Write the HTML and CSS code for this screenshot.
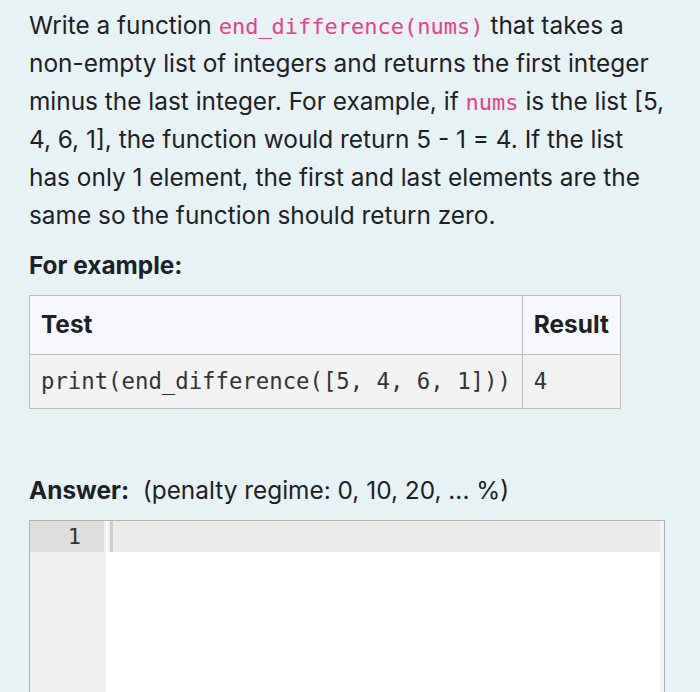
FILE: index.html
```html
<!DOCTYPE html>
<html>
<head>
<meta charset="utf-8">
<link rel="stylesheet" href="styles.css">
</head>
<body>
<div class="page">
  <p class="qtext">Write a function <code>end_difference(nums)</code> that takes a non-empty list of integers and returns the first integer minus the last integer. For example, if <code>nums</code> is the list [5, 4, 6, 1], the function would return 5 - 1 = 4. If the list has only 1 element, the first and last elements are the same so the function should return zero.</p>
  <h4 class="for-example">For example:</h4>
  <table class="examples">
    <thead>
      <tr><th class="col-test">Test</th><th class="col-result">Result</th></tr>
    </thead>
    <tbody>
      <tr><td class="col-test mono">print(end_difference([5, 4, 6, 1]))</td><td class="col-result mono">4</td></tr>
    </tbody>
  </table>
  <div class="answer-label"><b>Answer:</b>&nbsp; (penalty regime: 0, 10, 20, ... %)</div>
  <div class="editor">
    <div class="gutter">
      <div class="gutter-cell active">1</div>
    </div>
    <div class="content">
      <div class="line active"><span class="cursor"></span></div>
    </div>
    <div class="vscroll"></div>
  </div>
</div>
</body>
</html>
```
FILE: styles.css
```css
html, body {
  margin: 0;
  padding: 0;
  background: #e7f2f5;
}
.page {
  padding: 6px 0 0 29px;
  width: 638px;
  font-family: "Inter", "Noto Sans", sans-serif;
  font-size: 24.4px;
  line-height: 38px;
  color: #1d2125;
}
.qtext {
  margin: 0;
}
code {
  font-family: "DejaVu Sans Mono", monospace;
  font-size: 22px;
  line-height: 1;
  color: #e83e8c;
}
.for-example {
  margin: 12px 0 0 0;
  font-size: 24.4px;
  font-weight: 700;
  line-height: 38px;
}
.examples {
  margin-top: 11px;
  border-collapse: collapse;
}
.examples th,
.examples td {
  border: 1px solid #bdbdbd;
  text-align: left;
}
.examples th {
  background: #f7f8fc;
  font-weight: 700;
  padding: 10px 11px 11px 11px;
  line-height: 37px;
}
.examples td {
  background: #f2f2f2;
  padding: 7px 11px 8px 11px;
  line-height: 38px;
}
.mono {
  font-family: "DejaVu Sans Mono", monospace;
  font-size: 22.3px;
  color: #333;
}
.answer-label {
  margin-top: 62px;
}
.answer-label b {
  font-weight: 700;
}
.editor {
  margin-top: 11px;
  width: 636px;
  height: 180px;
  border: 1px solid #b0b0b0;
  border-bottom: none;
  display: flex;
  background: #fff;
  box-sizing: border-box;
}
.gutter {
  width: 76px;
  background: #f0f0f0;
  flex: none;
}
.gutter-cell {
  height: 31px;
  line-height: 31px;
  text-align: right;
  padding-right: 23px;
  font-family: "DejaVu Sans Mono", monospace;
  font-size: 22px;
  color: #333;
}
.gutter-cell.active {
  background: #dedede;
  margin-right: 2px;
}
.content {
  flex: 1;
  padding-left: 2px;
}
.line {
  height: 31px;
  position: relative;
}
.line.active {
  background: #ebebeb;
}
.cursor {
  position: absolute;
  left: 2px;
  top: 0;
  width: 3px;
  height: 31px;
  background: #cfcfcf;
}
.vscroll {
  width: 4px;
  flex: none;
  background: #f3f3f3;
}
```
